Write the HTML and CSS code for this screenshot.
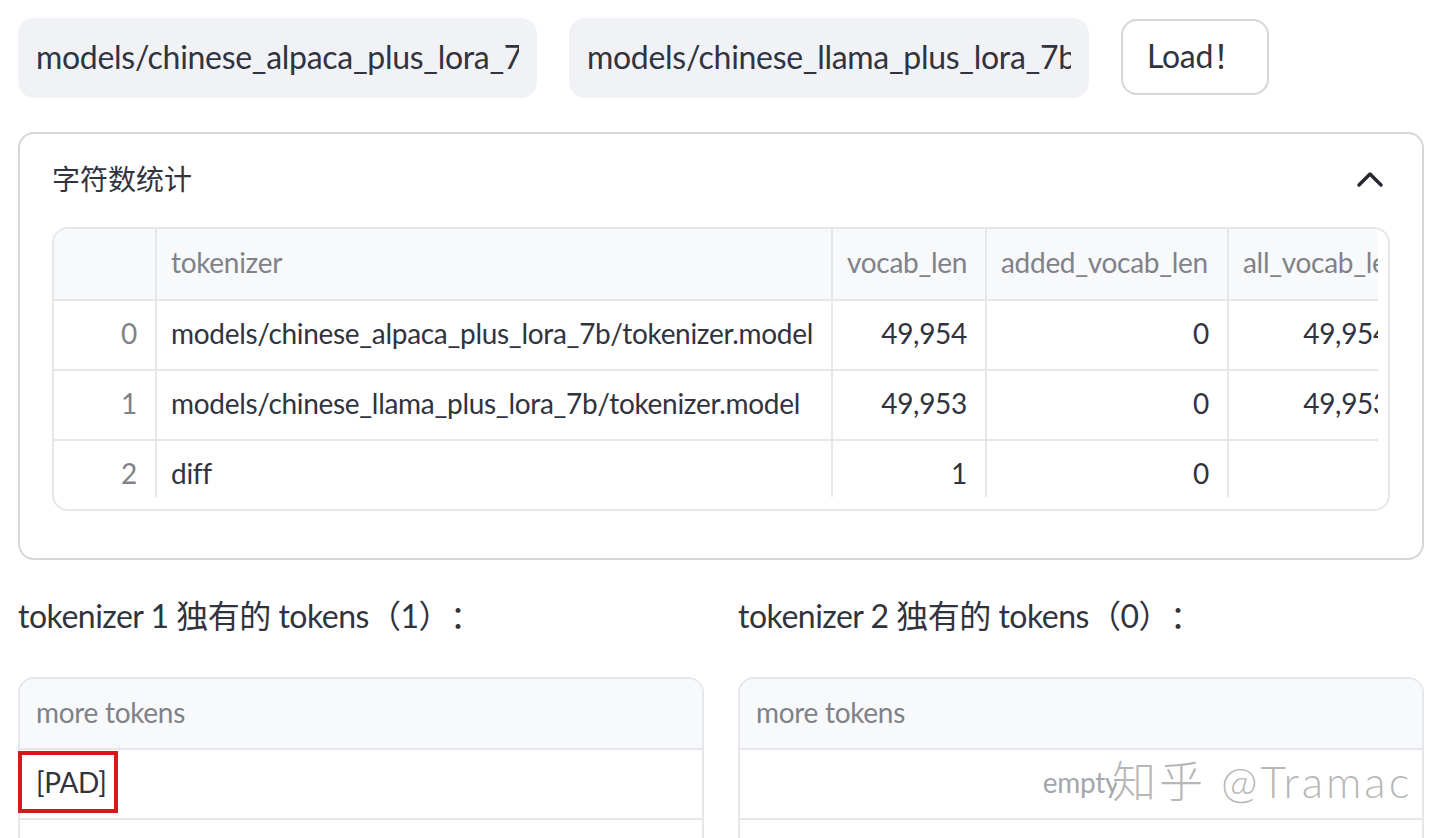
FILE: index.html
```html
<!DOCTYPE html>
<html lang="zh">
<head>
<meta charset="utf-8">
<title>Tokenizer compare</title>
<link rel="stylesheet" href="styles.css">
</head>
<body>
<div class="page">
  <div class="top">
    <div class="input"><span>models/chinese_alpaca_plus_lora_7b</span></div>
    <div class="input"><span>models/chinese_llama_plus_lora_7b</span></div>
    <button class="btn">Load！</button>
  </div>

  <section class="expander">
    <div class="exp-head">
      <span class="exp-title">字符数统计</span>
      <svg class="chev" width="26" height="18" viewBox="0 0 26 18"><polyline points="2,15 13,4 24,15" fill="none" stroke="#262730" stroke-width="3.4" stroke-linecap="round" stroke-linejoin="round"/></svg>
    </div>
    <div class="exp-body">
      <div class="df">
        <div class="df-view">
          <table class="grid">
            <colgroup>
              <col class="c-idx"><col class="c-tok"><col class="c-voc"><col class="c-add"><col class="c-all">
            </colgroup>
            <thead>
              <tr><th></th><th>tokenizer</th><th>vocab_len</th><th>added_vocab_len</th><th>all_vocab_len</th></tr>
            </thead>
            <tbody>
              <tr><td class="idx">0</td><td>models/chinese_alpaca_plus_lora_7b/tokenizer.model</td><td class="num">49,954</td><td class="num">0</td><td class="num">49,954</td></tr>
              <tr><td class="idx">1</td><td>models/chinese_llama_plus_lora_7b/tokenizer.model</td><td class="num">49,953</td><td class="num">0</td><td class="num">49,953</td></tr>
              <tr><td class="idx">2</td><td>diff</td><td class="num">1</td><td class="num">0</td><td class="num"></td></tr>
            </tbody>
          </table>
        </div>
        <div class="df-gutter"></div>
      </div>
    </div>
  </section>

  <div class="cols">
    <div class="col">
      <p class="sub">tokenizer 1 独有的 tokens（1）：</p>
      <div class="tk">
        <div class="tk-head">more tokens</div>
        <div class="tk-row">[PAD]</div>
        <div class="tk-row"></div>
        <div class="mark"></div>
      </div>
    </div>
    <div class="col">
      <p class="sub">tokenizer 2 独有的 tokens（0）：</p>
      <div class="tk">
        <div class="tk-head">more tokens</div>
        <div class="tk-row empty">empty</div>
        <div class="tk-row"></div>
        <div class="watermark">知乎 @Tramac</div>
      </div>
    </div>
  </div>
</div>
</body>
</html>
```

FILE: styles.css
```css
* { box-sizing: border-box; }
html, body { margin: 0; padding: 0; background: #fff; }
body {
  font-family: Lato, "Noto Sans CJK SC", sans-serif;
  color: #31333f;
  overflow: hidden;
  letter-spacing: -0.3px;
  text-spacing-trim: space-all;
}
.page { padding: 18px 18px 0 18px; width: 1442px; }

.top {
  display: grid;
  grid-template-columns: 519px 520px 148px;
  column-gap: 32px;
  align-items: start;
}
.input {
  height: 80px;
  background: #f0f2f6;
  border-radius: 16px;
  padding: 0 18px;
  display: flex;
  align-items: center;
  font-size: 32px;
  overflow: hidden;
  white-space: nowrap;
}
.input span { display: block; overflow: hidden; width: 100%; margin-top: -4px; }
.btn {
  margin-top: 1px;
  height: 76px;
  width: 148px;
  border: 2px solid #d6d6d9;
  border-radius: 16px;
  background: #fff;
  color: #31333f;
  font-family: inherit;
  font-size: 32px;
  letter-spacing: -0.3px;
  text-align: left;
  padding: 0 0 6px 24px;
  text-spacing-trim: space-all;
}

.expander {
  margin-top: 34px;
  border: 2px solid #d6d6d9;
  border-radius: 16px;
}
.exp-head {
  height: 92px;
  display: flex;
  align-items: center;
  justify-content: space-between;
  padding: 0 39px 0 32px;
}
.exp-title { font-size: 28px; font-family: "Noto Sans CJK SC", sans-serif; letter-spacing: 0; margin-top: -4px; }
.chev { display: block; margin-top: -2px; }
.exp-body { padding: 1px 32px 47px 32px; }

.df {
  border: 2px solid #e6e7ea;
  border-radius: 16px;
  overflow: hidden;
  height: 284px;
  display: flex;
  flex-direction: column;
}
.df-view {
  width: 1324px;
  height: 268px;
  overflow: hidden;
}
.df-gutter { height: 12px; }
.grid {
  width: 1354px;
  border-collapse: collapse;
  table-layout: fixed;
  font-size: 28px;
  white-space: nowrap;
}
.c-idx { width: 102px; }
.c-tok { width: 676px; }
.c-voc { width: 154px; }
.c-add { width: 242px; }
.c-all { width: 180px; }
.grid th, .grid td {
  border-right: 2px solid #e6e7ea;
  border-bottom: 2px solid #e6e7ea;
  padding: 0 16px 0 14px;
  overflow: hidden;
}
.grid th {
  height: 71px;
  background: #f8f9fb;
  color: #808289;
  font-weight: 400;
  text-align: left;
  padding-bottom: 4px;
}
.grid td { height: 70px; padding-bottom: 4px; }
.grid td.idx { text-align: right; color: #808289; padding-right: 18px; }
.grid td.num { text-align: right; padding-right: 18px; }

.cols {
  display: grid;
  grid-template-columns: 686px 686px;
  column-gap: 34px;
}
.sub {
  margin: 0;
  padding-top: 30px;
  height: 117px;
  font-size: 32px;
  line-height: 52px;
  letter-spacing: -0.5px;
}
.tk {
  position: relative;
  border: 2px solid #e6e7ea;
  border-bottom: none;
  border-radius: 16px 16px 0 0;
  height: 200px;
}
.tk-head {
  height: 71px;
  background: #f8f9fb;
  border-bottom: 2px solid #e6e7ea;
  border-radius: 14px 14px 0 0;
  color: #808289;
  font-size: 28px;
  display: flex;
  align-items: center;
  padding: 0 16px 4px 16px;
}
.tk-row {
  height: 70px;
  border-bottom: 2px solid #e6e7ea;
  font-size: 28px;
  display: flex;
  align-items: center;
  padding: 0 16px 4px 16px;
}
.tk-row.empty {
  justify-content: center;
  color: #a3a6ad;
}
.mark {
  position: absolute;
  left: -2px;
  top: 72px;
  width: 100px;
  height: 62px;
  border: 4px solid #d4181b;
}
.watermark {
  position: absolute;
  left: 372px;
  top: 72px;
  font-size: 44px;
  font-weight: 300;
  line-height: 60px;
  letter-spacing: 3px;
  color: rgba(160, 160, 160, 0.75);
  text-shadow: 2px 2px 0 #fff, -1px -1px 0 rgba(255,255,255,0.9);
  white-space: nowrap;
}
```
